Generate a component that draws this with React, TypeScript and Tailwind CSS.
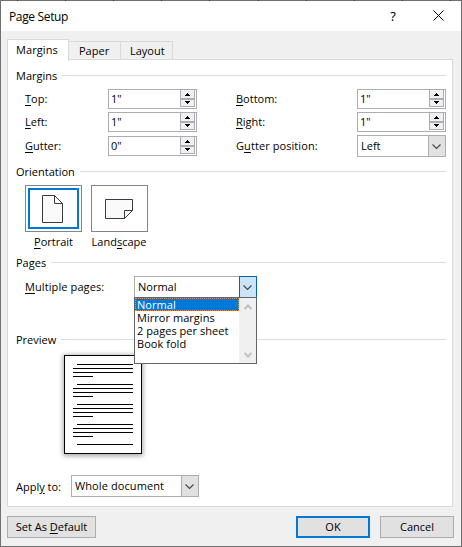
import type { ReactNode } from "react";

const ticks = ["a", "b", "c", "d", "e", "f", "g", "h", "i", "j"];

const Legend = ({ children, className = "" }: { children: ReactNode; className?: string }) => (
  <div className={`flex h-[15px] items-center gap-[5px] ${className}`}>
    <span className="-mt-px">{children}</span>
    <div className="h-px flex-1 bg-[#dcdcdc]" />
  </div>
);

const Label = ({ children, className = "" }: { children: ReactNode; className?: string }) => (
  <span className={`-mt-[2px] ${className}`}>{children}</span>
);

const Key = ({ children }: { children: ReactNode }) => (
  <span className="underline decoration-1 underline-offset-2">{children}</span>
);

const Spinner = ({ value }: { value: string }) => (
  <div className="flex h-5 w-[89px] border border-[#abadb3] bg-white">
    <span className="flex-1 pl-[2px] leading-[17px]">{value}</span>
    <svg width="16" height="18" viewBox="0 0 16 18" shapeRendering="crispEdges">
      <path d="M0 0h16v18H0z" fill="#f0f0f0" />
      <path d="M0 0h1v8H0zM14 0h1v8h-1zM0 8h15v2H0zM0 10h1v7H0zM14 10h1v7h-1zM0 16h15v1H0z" fill="#abadb3" />
      <path d="M15 0h1v18h-1zM0 17h16v1H0z" fill="#fff" />
      <path d="M7 3h1v1H7zM6 4h3v1H6zM5 5h5v1H5zM5 11h5v1H5zM6 12h3v1H6zM7 13h1v1H7z" fill="#000" />
    </svg>
  </div>
);

const Combo = ({ value, className, open = false }: { value: string; className: string; open?: boolean }) => (
  <div className={`flex h-[22px] border border-[#abadb3] bg-white ${className}`}>
    <span className="flex-1 pl-[3px] leading-[19px]">{value}</span>
    <div
      className={`-my-px -mr-px flex w-[18px] items-center justify-center border ${
        open ? "border-[#0a64ad] bg-[#cce4f7]" : "border-[#abadb3] bg-[#e1e1e1]"
      }`}
    >
      <svg className="mr-px mt-[2px]" width="9" height="6" viewBox="0 0 9 6" fill="none" stroke="#444" strokeWidth="1.1">
        <path d="M.5 .5l4 4 4-4" />
      </svg>
    </div>
  </div>
);

const PushButton = ({ children, className }: { children: ReactNode; className: string }) => (
  <button className={`flex h-[22px] items-center justify-center bg-[#e1e1e1] ${className}`}>
    <span className="-mt-px">{children}</span>
  </button>
);

const Preview = () => (
  <svg className="block shadow-[0_1px_5px_1px_rgba(0,0,0,0.35)]" width="78" height="99" shapeRendering="crispEdges">
    <rect x=".5" y=".5" width="77" height="98" fill="#fff" stroke="#000" />
    {[9, 29, 49, 69].map((y) => (
      <path key={y} d={`M13 ${y}.5h56M9 ${y + 4}.5h60M9 ${y + 8}.5h60M9 ${y + 12}.5h20`} stroke="#000" />
    ))}
    <path d="M13 89.5h56" stroke="#000" />
  </svg>
);

const Options = () => (
  <div className="absolute left-0 top-[21px] z-10 flex h-[67px] w-[123px] border border-[#646464] bg-white">
    <ul className="w-[104px] leading-[13px] tracking-[0.04px]">
      <li className="h-[13px] bg-[#0078d7] pl-[2px] text-white outline-1 -outline-offset-1 outline-dotted outline-[#ff8728]">
        Normal
      </li>
      <li className="h-[13px] pl-[2px]">Mirror margins</li>
      <li className="h-[13px] pl-[2px]">2 pages per sheet</li>
      <li className="h-[13px] pl-[2px]">Book fold</li>
    </ul>
    <div className="flex flex-1 flex-col items-center justify-between bg-[#f0f0f0] pb-[5px] pt-[6px]">
      <svg className="ml-px" width="8" height="6" viewBox="0 0 8 6" fill="none" stroke="#bfbfbf" strokeWidth="2">
        <path d="M.6 5l3.4-3.6L7.4 5" />
      </svg>
      <svg className="ml-px" width="8" height="6" viewBox="0 0 8 6" fill="none" stroke="#bfbfbf" strokeWidth="2">
        <path d="M.6 1L4 4.6 7.4 1" />
      </svg>
    </div>
  </div>
);

export default function App() {
  return (
    <div className="flex h-[547px] w-[462px] flex-col bg-[#707070] font-['Open_Sans','Noto_Sans',sans-serif] text-[11px] leading-[15px] text-black">
      <div className="flex h-px justify-between pl-[17px] pr-[11px]">
        {ticks.map((t) => (
          <i key={t} className="h-px w-px bg-[#333]" />
        ))}
      </div>
      <div className="mx-px mb-px flex flex-1 flex-col bg-[#f0f0f0]">
        <header className="flex h-[30px] items-center bg-white pl-2 pr-[17px]">
          <h1 className="flex-1 text-[12px] tracking-[-0.35px]">Page Setup</h1>
          <span className="mr-[37px] font-['Noto_Sans',sans-serif] text-[13px]">?</span>
          <svg className="-mt-px" width="11" height="11" viewBox="0 0 11 11" stroke="#000" strokeWidth="1">
            <path d="M.5 .5l10 10M10.5 .5l-10 10" />
          </svg>
        </header>

        <nav className="relative z-10 mt-[7px] flex h-[22px] items-end pl-[6px]">
          <div className="-mb-px h-[22px] w-[62px] border border-b-0 border-[#d9d9d9] bg-white pl-2 pt-[2px] tracking-[0.1px]">
            Margins
          </div>
          <div className="h-[19px] w-[52px] border-r border-t border-[#d9d9d9] pl-[10px] pt-px">Paper</div>
          <div className="h-[19px] w-[52px] border-r border-t border-[#d9d9d9] pl-[9px] pt-px">Layout</div>
        </nav>

        <main className="-mt-px ml-[6px] h-[448px] w-[446px] border border-[#d9d9d9] bg-white pl-2 pr-[6px] pt-2">
          <Legend>Margins</Legend>
          <div className="mt-[6px] grid grid-cols-[83px_128px_121px_89px] items-center gap-y-[3px] pl-[9px]">
            <Label><Key>T</Key>op:</Label>
            <Spinner value={'1"'} />
            <Label><Key>B</Key>ottom:</Label>
            <Spinner value={'1"'} />
            <Label><Key>L</Key>eft:</Label>
            <Spinner value={'1"'} />
            <Label><Key>R</Key>ight:</Label>
            <Spinner value={'1"'} />
            <Label><Key>G</Key>utter:</Label>
            <Spinner value={'0"'} />
            <Label className="tracking-[0.08px]">G<Key>u</Key>tter position:</Label>
            <Combo value="Left" className="w-[89px]" />
          </div>

          <Legend className="mt-[7px]">Orientation</Legend>
          <div className="mt-[6px] flex gap-[9px] pl-[9px] text-center">
            <div className="w-[57px]">
              <div className="h-[47px] border border-[#83838b] p-[2px]">
                <div className="flex h-full items-center justify-center border-2 border-[#0078d7]">
                  <svg className="-ml-[2px] mt-px" width="21" height="28" viewBox="0 0 21 28" fill="#fafafa" stroke="#3b3b3b">
                    <path d="M.5 .5h12l8 8v19H.5z" />
                    <path d="M12.5 .5v8h8z" />
                  </svg>
                </div>
              </div>
              <div className="mt-[2px] h-4"><Key>P</Key>ortrait</div>
            </div>
            <div className="w-[57px]">
              <div className="flex h-[47px] items-center justify-center border border-[#83838b]">
                <svg className="-ml-px mt-px" width="28" height="20" viewBox="0 0 28 20" fill="#fafafa" stroke="#3b3b3b">
                  <path d="M.5 .5h27v11l-8 8H.5z" />
                  <path d="M27.5 11.5h-8v8z" />
                </svg>
              </div>
              <div className="-ml-px mt-[2px] h-4">Land<Key>s</Key>cape</div>
            </div>
          </div>

          <Legend className="mt-[5px]">Pages</Legend>
          <div className="mt-[6px] flex items-center pl-[9px]">
            <Label className="w-[109px] tracking-[0.1px]"><Key>M</Key>ultiple pages:</Label>
            <div className="relative">
              <Combo value="Normal" className="w-[123px]" open />
              <Options />
            </div>
          </div>

          <Legend className="mt-[34px]">Preview</Legend>
          <div className="mt-2 pl-12">
            <Preview />
          </div>

          <div className="mt-[21px] flex items-center">
            <span className="w-[55px]">Appl<Key>y</Key> to:</span>
            <Combo value="Whole document" className="w-[128px] tracking-[0.1px]" />
          </div>
        </main>

        <footer className="mt-[9px] flex pl-[6px]">
          <PushButton className="w-[89px] border border-[#adadad]">Set As <Key>D</Key>efault</PushButton>
          <PushButton className="ml-[200px] w-[74px] border-2 border-[#0078d7]">OK</PushButton>
          <PushButton className="ml-[10px] w-[74px] border border-[#adadad]">Cancel</PushButton>
        </footer>
      </div>
    </div>
  );
}
